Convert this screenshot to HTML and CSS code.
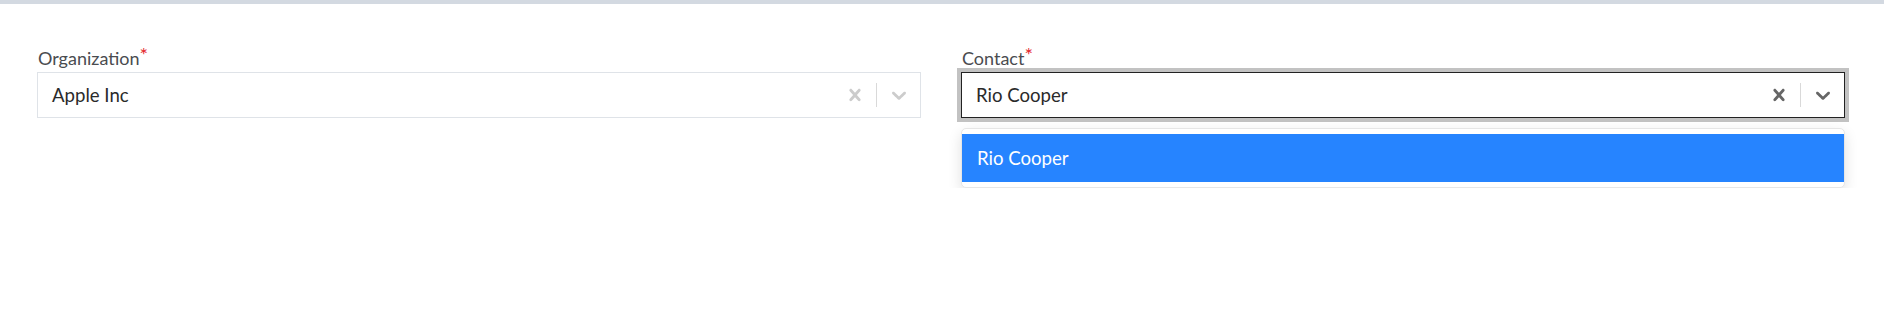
FILE: index.html
```html
<!DOCTYPE html>
<html lang="en">
<head>
<meta charset="utf-8">
<title>Form</title>
<link rel="stylesheet" href="styles.css">
</head>
<body>
<div class="topbar"></div>
<div class="form">
  <div class="field">
    <label class="label">Organization<span class="req">*</span></label>
    <div class="control">
      <div class="value">Apple Inc</div>
      <div class="indicators">
        <span class="ind">
          <svg viewBox="0 0 20 20" width="24" height="24"><path d="M14.348 14.849c-0.469 0.469-1.229 0.469-1.697 0l-2.651-3.030-2.651 3.029c-0.469 0.469-1.229 0.469-1.697 0-0.469-0.469-0.469-1.229 0-1.697l2.758-3.150-2.759-3.152c-0.469-0.469-0.469-1.228 0-1.697s1.228-0.469 1.697 0l2.652 3.031 2.651-3.031c0.469-0.469 1.228-0.469 1.697 0s0.469 1.229 0 1.697l-2.758 3.152 2.758 3.150c0.469 0.469 0.469 1.229 0 1.698z"/></svg>
        </span>
        <span class="sep"></span>
        <span class="ind">
          <svg viewBox="0 0 20 20" width="24" height="24"><path d="M4.516 7.548c0.436-0.446 1.043-0.481 1.576 0l3.908 3.747 3.908-3.747c0.533-0.481 1.141-0.446 1.574 0 0.436 0.445 0.408 1.197 0 1.615-0.406 0.418-4.695 4.502-4.695 4.502-0.217 0.223-0.502 0.335-0.787 0.335s-0.57-0.112-0.789-0.335c0 0-4.287-4.084-4.695-4.502s-0.436-1.170 0-1.615z"/></svg>
        </span>
      </div>
    </div>
  </div>
  <div class="field">
    <label class="label">Contact<span class="req">*</span></label>
    <div class="control focused">
      <div class="value">Rio Cooper</div>
      <div class="indicators">
        <span class="ind">
          <svg viewBox="0 0 20 20" width="24" height="24"><path d="M14.348 14.849c-0.469 0.469-1.229 0.469-1.697 0l-2.651-3.030-2.651 3.029c-0.469 0.469-1.229 0.469-1.697 0-0.469-0.469-0.469-1.229 0-1.697l2.758-3.150-2.759-3.152c-0.469-0.469-0.469-1.228 0-1.697s1.228-0.469 1.697 0l2.652 3.031 2.651-3.031c0.469-0.469 1.228-0.469 1.697 0s0.469 1.229 0 1.697l-2.758 3.152 2.758 3.150c0.469 0.469 0.469 1.229 0 1.698z"/></svg>
        </span>
        <span class="sep"></span>
        <span class="ind">
          <svg viewBox="0 0 20 20" width="24" height="24"><path d="M4.516 7.548c0.436-0.446 1.043-0.481 1.576 0l3.908 3.747 3.908-3.747c0.533-0.481 1.141-0.446 1.574 0 0.436 0.445 0.408 1.197 0 1.615-0.406 0.418-4.695 4.502-4.695 4.502-0.217 0.223-0.502 0.335-0.787 0.335s-0.57-0.112-0.789-0.335c0 0-4.287-4.084-4.695-4.502s-0.436-1.170 0-1.615z"/></svg>
        </span>
      </div>
    </div>
    <div class="menu">
      <div class="option">Rio Cooper</div>
    </div>
  </div>
</div>
</body>
</html>
```

FILE: styles.css
```css
* { box-sizing: border-box; }
html, body {
  margin: 0;
  padding: 0;
  background: #fff;
  font-family: Lato, "Open Sans", "Liberation Sans", sans-serif;
}
.topbar {
  height: 4px;
  background: #d3d9e1;
}
.form {
  display: grid;
  grid-template-columns: 1fr 1fr;
  align-items: start;
  column-gap: 40px;
  padding: 43px 39px 0 37px;
}
.field {
  display: flex;
  flex-direction: column;
}
.label {
  font-size: 18px;
  line-height: 22px;
  height: 22px;
  color: #4a4c50;
  margin-bottom: 3px;
  padding-left: 1px;
}
.req {
  color: #e4262b;
  font-size: 20px;
  line-height: 1;
  vertical-align: top;
  position: relative;
  top: -3px;
}
.control {
  height: 46px;
  border: 1px solid #dfe3e8;
  background: #fff;
  display: flex;
  align-items: center;
  padding-left: 14px;
}
.control.focused {
  border: 1.5px solid #222;
  outline: 4px solid #c2c2c2;
}
.value {
  flex: 1;
  font-size: 18.6px;
  color: #2a2a2a;
}
.indicators {
  display: flex;
  align-items: center;
  align-self: stretch;
}
.ind {
  width: 43px;
  display: flex;
  align-items: center;
  justify-content: center;
  fill: #cccccc;
}
.focused .ind { fill: #666666; }
.sep {
  width: 1px;
  align-self: stretch;
  margin: 10px 0;
  background: #d9d9d9;
}
.menu {
  margin-top: 10px;
  background: #fff;
  border: 1px solid #e6e6e6;
  border-radius: 5px;
  padding: 5px 0;
  box-shadow: 0 5px 14px rgba(0,0,0,0.12);
}
.option {
  height: 48px;
  display: flex;
  align-items: center;
  padding-left: 15px;
  background: #2684ff;
  color: #fff;
  font-size: 18.6px;
}
```
